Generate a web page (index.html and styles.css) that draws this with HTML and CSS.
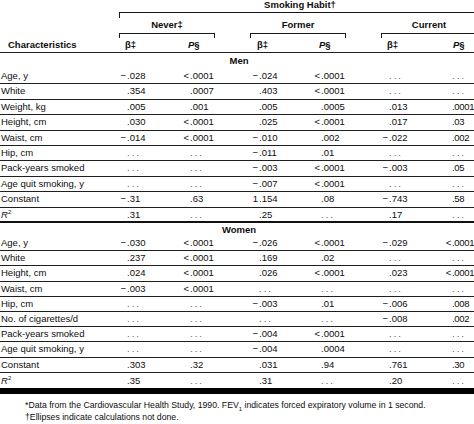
FILE: index.html
```html
<!DOCTYPE html>
<html lang="en">
<head>
<meta charset="utf-8">
<title>Smoking Habit table</title>
<link rel="stylesheet" href="styles.css">
</head>
<body>
<div class="page">
  <div class="super">
    <div class="super-title">Smoking Habit†</div>
    <div class="bracket top"></div>
    <div class="groups">
      <div class="group"><div class="gt">Never‡</div><div class="bracket"></div></div>
      <div class="group"><div class="gt">Former</div><div class="bracket"></div></div>
      <div class="group"><div class="gt">Current</div><div class="bracket"></div></div>
    </div>
  </div>

  <div class="row head">
    <div class="lbl">Characteristics</div>
    <div class="h">β‡</div><div class="h"><i>P</i>§</div>
    <div class="h">β‡</div><div class="h"><i>P</i>§</div>
    <div class="h">β‡</div><div class="h"><i>P</i>§</div>
  </div>

  <div class="row sec">Men</div>

  <div class="row">
    <div class="lbl">Age, y</div>
    <div class="v"><span class="p">−</span>.028</div><div class="v"><span class="p">&lt;</span>.0001</div>
    <div class="v"><span class="p">−</span>.024</div><div class="v"><span class="p">&lt;</span>.0001</div>
    <div class="v e">...</div><div class="v e">...</div>
  </div>
  <div class="row">
    <div class="lbl">White</div>
    <div class="v"><span class="p"></span>.354</div><div class="v"><span class="p"></span>.0007</div>
    <div class="v"><span class="p"></span>.403</div><div class="v"><span class="p">&lt;</span>.0001</div>
    <div class="v e">...</div><div class="v e">...</div>
  </div>
  <div class="row">
    <div class="lbl">Weight, kg</div>
    <div class="v"><span class="p"></span>.005</div><div class="v"><span class="p"></span>.001</div>
    <div class="v"><span class="p"></span>.005</div><div class="v"><span class="p"></span>.0005</div>
    <div class="v"><span class="p"></span>.013</div><div class="v"><span class="p"></span>.0001</div>
  </div>
  <div class="row">
    <div class="lbl">Height, cm</div>
    <div class="v"><span class="p"></span>.030</div><div class="v"><span class="p">&lt;</span>.0001</div>
    <div class="v"><span class="p"></span>.025</div><div class="v"><span class="p">&lt;</span>.0001</div>
    <div class="v"><span class="p"></span>.017</div><div class="v"><span class="p"></span>.03</div>
  </div>
  <div class="row">
    <div class="lbl">Waist, cm</div>
    <div class="v"><span class="p">−</span>.014</div><div class="v"><span class="p">&lt;</span>.0001</div>
    <div class="v"><span class="p">−</span>.010</div><div class="v"><span class="p"></span>.002</div>
    <div class="v"><span class="p">−</span>.022</div><div class="v"><span class="p"></span>.002</div>
  </div>
  <div class="row">
    <div class="lbl">Hip, cm</div>
    <div class="v e">...</div><div class="v e">...</div>
    <div class="v"><span class="p">−</span>.011</div><div class="v"><span class="p"></span>.01</div>
    <div class="v e">...</div><div class="v e">...</div>
  </div>
  <div class="row">
    <div class="lbl">Pack-years smoked</div>
    <div class="v e">...</div><div class="v e">...</div>
    <div class="v"><span class="p">−</span>.003</div><div class="v"><span class="p">&lt;</span>.0001</div>
    <div class="v"><span class="p">−</span>.003</div><div class="v"><span class="p"></span>.05</div>
  </div>
  <div class="row">
    <div class="lbl">Age quit smoking, y</div>
    <div class="v e">...</div><div class="v e">...</div>
    <div class="v"><span class="p">−</span>.007</div><div class="v"><span class="p">&lt;</span>.0001</div>
    <div class="v e">...</div><div class="v e">...</div>
  </div>
  <div class="row">
    <div class="lbl">Constant</div>
    <div class="v"><span class="p">−</span>.31</div><div class="v"><span class="p"></span>.63</div>
    <div class="v"><span class="p">1</span>.154</div><div class="v"><span class="p"></span>.08</div>
    <div class="v"><span class="p">−</span>.743</div><div class="v"><span class="p"></span>.58</div>
  </div>
  <div class="row end">
    <div class="lbl"><i>R</i><sup>2</sup></div>
    <div class="v"><span class="p"></span>.31</div><div class="v e">...</div>
    <div class="v"><span class="p"></span>.25</div><div class="v e">...</div>
    <div class="v"><span class="p"></span>.17</div><div class="v e">...</div>
  </div>

  <div class="row sec women">Women</div>

  <div class="row w">
    <div class="lbl">Age, y</div>
    <div class="v"><span class="p">−</span>.030</div><div class="v"><span class="p">&lt;</span>.0001</div>
    <div class="v"><span class="p">−</span>.026</div><div class="v"><span class="p">&lt;</span>.0001</div>
    <div class="v"><span class="p">−</span>.029</div><div class="v"><span class="p">&lt;</span>.0001</div>
  </div>
  <div class="row w">
    <div class="lbl">White</div>
    <div class="v"><span class="p"></span>.237</div><div class="v"><span class="p">&lt;</span>.0001</div>
    <div class="v"><span class="p"></span>.169</div><div class="v"><span class="p"></span>.02</div>
    <div class="v e">...</div><div class="v e">...</div>
  </div>
  <div class="row w">
    <div class="lbl">Height, cm</div>
    <div class="v"><span class="p"></span>.024</div><div class="v"><span class="p">&lt;</span>.0001</div>
    <div class="v"><span class="p"></span>.026</div><div class="v"><span class="p">&lt;</span>.0001</div>
    <div class="v"><span class="p"></span>.023</div><div class="v"><span class="p">&lt;</span>.0001</div>
  </div>
  <div class="row w">
    <div class="lbl">Waist, cm</div>
    <div class="v"><span class="p">−</span>.003</div><div class="v"><span class="p">&lt;</span>.0001</div>
    <div class="v e">...</div><div class="v e">...</div>
    <div class="v e">...</div><div class="v e">...</div>
  </div>
  <div class="row w">
    <div class="lbl">Hip, cm</div>
    <div class="v e">...</div><div class="v e">...</div>
    <div class="v"><span class="p">−</span>.003</div><div class="v"><span class="p"></span>.01</div>
    <div class="v"><span class="p">−</span>.006</div><div class="v"><span class="p"></span>.008</div>
  </div>
  <div class="row w">
    <div class="lbl">No. of cigarettes/d</div>
    <div class="v e">...</div><div class="v e">...</div>
    <div class="v e">...</div><div class="v e">...</div>
    <div class="v"><span class="p">−</span>.008</div><div class="v"><span class="p"></span>.002</div>
  </div>
  <div class="row w">
    <div class="lbl">Pack-years smoked</div>
    <div class="v e">...</div><div class="v e">...</div>
    <div class="v"><span class="p">−</span>.004</div><div class="v"><span class="p">&lt;</span>.0001</div>
    <div class="v e">...</div><div class="v e">...</div>
  </div>
  <div class="row w">
    <div class="lbl">Age quit smoking, y</div>
    <div class="v e">...</div><div class="v e">...</div>
    <div class="v"><span class="p">−</span>.004</div><div class="v"><span class="p"></span>.0004</div>
    <div class="v e">...</div><div class="v e">...</div>
  </div>
  <div class="row w">
    <div class="lbl">Constant</div>
    <div class="v"><span class="p"></span>.303</div><div class="v"><span class="p"></span>.32</div>
    <div class="v"><span class="p"></span>.031</div><div class="v"><span class="p"></span>.94</div>
    <div class="v"><span class="p"></span>.761</div><div class="v"><span class="p"></span>.30</div>
  </div>
  <div class="row w last">
    <div class="lbl"><i>R</i><sup>2</sup></div>
    <div class="v"><span class="p"></span>.35</div><div class="v e">...</div>
    <div class="v"><span class="p"></span>.31</div><div class="v e">...</div>
    <div class="v"><span class="p"></span>.20</div><div class="v e">...</div>
  </div>

  <div class="bar"></div>

  <div class="notes">
    <p>*Data from the Cardiovascular Health Study, 1990. FEV<sub>1</sub> indicates forced expiratory volume in 1 second.</p>
    <p>†Ellipses indicate calculations not done.</p>
  </div>
</div>
</body>
</html>
```

FILE: styles.css
```css
html, body {
  margin: 0;
  padding: 0;
  background: #fff;
}

body {
  width: 474px;
  height: 424px;
  overflow: hidden;
  font-family: "Liberation Sans", Arial, sans-serif;
  font-size: 9.5px;
  color: #0d0d0d;
}

.page {
  width: 474px;
}

/* ---------- column group header ---------- */
.super {
  padding-left: 119px;
  width: 362px;
}

.super-title {
  height: 10px;
  line-height: 10px;
  text-align: center;
  font-weight: bold;
}

.bracket {
  box-sizing: border-box;
  height: 5px;
  margin-top: 2px;
  border: 1px solid #1a1a1a;
  border-bottom: none;
}

.bracket.top {
  height: 6px;
}

.groups {
  display: flex;
  gap: 35px;
  margin-top: 1px;
}

.group {
  width: 96px;
  flex: none;
}

.gt {
  height: 12px;
  line-height: 12px;
  text-align: center;
  font-weight: bold;
}

/* ---------- table rows ---------- */
.row {
  display: grid;
  grid-template-columns: 119px 63px 69px 62px 68px 63px 30px;
  box-sizing: border-box;
  height: 15.4px;
  line-height: 14.4px;
  border-bottom: 1px solid #1f1f1f;
  white-space: nowrap;
}

.row.w {
  height: 15.2px;
  line-height: 14.2px;
}

.row.head {
  height: 15px;
  line-height: 14px;
  font-weight: bold;
}

.row.head .lbl {
  padding-left: 8px;
}

.h {
  padding-left: 6px;
}

.row.head .h:last-child {
  padding-left: 9px;
}

.row.sec {
  display: block;
  height: 16px;
  line-height: 16px;
  border-bottom: none;
  text-align: center;
  font-weight: bold;
  padding-left: 4px;
}

.row.sec.women {
  height: 13.5px;
  line-height: 13.5px;
}

.row.end {
  height: 15px;
  line-height: 13px;
  border-bottom: 2px solid #111;
}

.row.last {
  height: 15px;
  line-height: 15px;
  border-bottom: none;
}

.lbl {
  padding-left: 1px;
}

.lbl sup,
.notes sub {
  font-size: 6px;
  line-height: 0;
}

.p {
  display: inline-block;
  box-sizing: border-box;
  width: 8px;
  padding-right: 1px;
  text-align: right;
}

/* last column sits against the page edge: tighten so values stay whole */
.v:last-child {
  letter-spacing: -0.3px;
}

.v.e {
  padding-left: 8px;
  letter-spacing: 2px;
  color: #555;
}

/* ---------- bottom rule & footnotes ---------- */
.bar {
  height: 6px;
  background: #000;
}

.notes {
  padding-top: 5px;
  padding-left: 25px;
  font-size: 8.7px;
}

.notes p {
  margin: 0;
  height: 12px;
  line-height: 12px;
  white-space: nowrap;
}
```
